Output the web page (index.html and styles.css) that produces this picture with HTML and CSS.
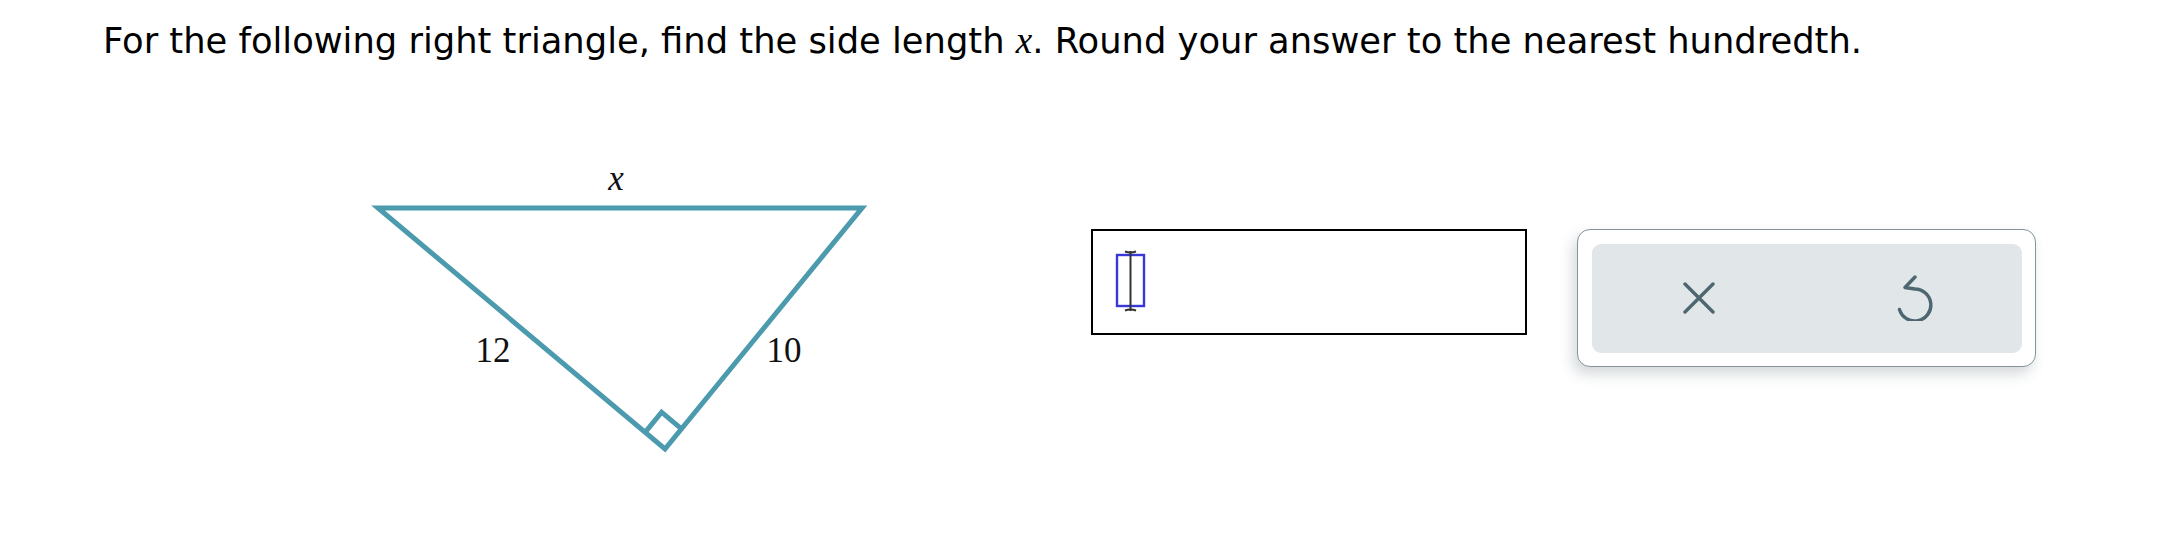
FILE: index.html
```html
<!DOCTYPE html>
<html>
<head>
<meta charset="utf-8">
<link rel="stylesheet" href="styles.css">
</head>
<body>
<div class="page">
  <p class="prompt">For the following right triangle, find the side length <span class="var">x</span>. Round your answer to the nearest hundredth.</p>
  <div class="work">
    <svg class="figure" width="560" height="320" viewBox="340 150 560 320">
      <g fill="none" stroke="#4b9aae" stroke-width="5" stroke-linejoin="miter">
        <polygon points="378,208 862,208 665,449"/>
        <polyline points="645.1,432.3 661.6,412.2 681.5,428.9"/>
      </g>
      <text class="lbl lbl-x" x="616" y="190" text-anchor="middle">x</text>
      <text class="lbl" x="493" y="362" text-anchor="middle">12</text>
      <text class="lbl" x="784" y="362" text-anchor="middle">10</text>
    </svg>
    <div class="answer" role="textbox">
      <svg class="caret" width="32" height="64" viewBox="0 0 32 64">
        <rect x="2" y="5" width="27" height="51" fill="none" stroke="#3838d6" stroke-width="2.4"/>
        <line x1="15.5" y1="1" x2="15.5" y2="61" stroke="#333" stroke-width="2"/>
        <path d="M10 1.5 Q15.5 3.5 21 1.5 M10 60.5 Q15.5 58.5 21 60.5" fill="none" stroke="#333" stroke-width="2"/>
      </svg>
    </div>
    <div class="tools">
      <div class="tools-inner">
        <button class="tool" aria-label="Clear">
          <svg width="32" height="32" viewBox="0 0 32 32"><path d="M2 2 L30 30 M30 2 L2 30" stroke="#4d6770" stroke-width="3.4" stroke-linecap="round" fill="none"/></svg>
        </button>
        <button class="tool" aria-label="Undo">
          <svg width="40" height="46" viewBox="0 0 40 46"><path d="M21 2 L11 12.5 L21 14 M21 14 A16 16 0 1 1 5.5 34.5" stroke="#4d6770" stroke-width="3.4" stroke-linecap="round" stroke-linejoin="round" fill="none"/></svg>
        </button>
      </div>
    </div>
  </div>
</div>
</body>
</html>
```

FILE: styles.css
```css
html, body {
  margin: 0;
  padding: 0;
  background: #ffffff;
}
.page {
  padding: 21px 0 0 103px;
}
.prompt {
  margin: 0;
  font-family: "DejaVu Sans", Verdana, sans-serif;
  font-size: 35.3px;
  line-height: 40px;
  color: #000000;
  white-space: nowrap;
}
.var {
  font-family: "Liberation Serif", "DejaVu Serif", serif;
  font-style: italic;
  font-size: 37px;
}
.work {
  display: flex;
  align-items: flex-start;
  margin-top: 89px;
}
.figure {
  display: block;
  margin-left: 237px;
}
.lbl {
  font-family: "Liberation Serif", "Times New Roman", serif;
  font-size: 35px;
  fill: #111111;
}
.lbl-x {
  font-style: italic;
}
.answer {
  box-sizing: border-box;
  width: 436px;
  height: 106px;
  margin-top: 79px;
  margin-left: 191px;
  border: 2px solid #000000;
  display: flex;
  align-items: center;
  padding-left: 22px;
}
.caret {
  display: block;
}
.tools {
  box-sizing: border-box;
  width: 459px;
  height: 138px;
  margin-top: 79px;
  margin-left: 50px;
  border: 1.5px solid #84949a;
  border-radius: 13px;
  padding: 13.5px;
  background: #ffffff;
  box-shadow: -4px 7px 14px rgba(40, 60, 70, 0.2);
}
.tools-inner {
  height: 100%;
  display: flex;
  background: #e1e6e8;
  border-radius: 9px;
}
.tool {
  flex: 1;
  border: 0;
  background: transparent;
  padding: 0;
  display: flex;
  align-items: center;
  justify-content: center;
}
.tool svg {
  display: block;
}
```
